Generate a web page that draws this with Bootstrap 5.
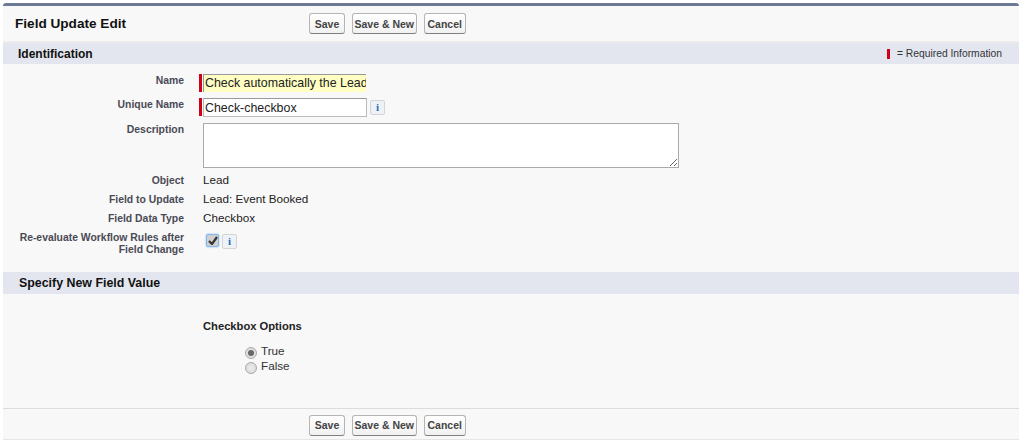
<!DOCTYPE html>
<html lang="en"><head><meta charset="utf-8"><title>Field Update Edit</title>
<link href="https://cdn.jsdelivr.net/npm/bootstrap@5.3.0/dist/css/bootstrap.min.css" rel="stylesheet">
<style>
html,body{height:447px;overflow:hidden;background:#fff}
body{font-family:"Liberation Sans",Arial,sans-serif;font-size:12px;color:#222;padding:3px 5px 0 3px}
.sf-panel{background:#f8f8f8;border-top:3px solid #6d7a96;border-radius:3px 3px 0 0;height:437px;border-bottom:1px solid #e6e6e6}
.sf-head{height:37px;border-bottom:2px solid #ececec}
.sf-title{width:306px;padding-left:12px;padding-top:2px;font-weight:700;font-size:13.6px;color:#111}
.sf-btn{font:700 10.5px "Liberation Sans",Arial,sans-serif;color:#444;height:21px;padding:0 1.5px;background:linear-gradient(#fff,#f1f1f1);border:1px solid #b5b5b5;border-bottom-color:#7f7f7f;border-radius:3px;min-width:36px}
.sf-btn:last-child{padding:0 3px}
.sf-btns{gap:7px}
.sf-bar{background:#e3e6ef;height:21px;color:#111;font-weight:700;font-size:12px}
.sf-bar1{padding-left:15px;padding-right:17px}
.sf-bar2{margin-top:13px;padding-left:16px;height:22px;font-size:12.4px}
.sf-req{font-weight:400;font-size:10.3px;color:#333}
.sf-redmark{width:3px;height:10px;background:#d0021b;margin-right:7px}
.sf-form{padding-top:10px}
.sf-row{display:flex}
.sf-lbl{width:181px;text-align:right;font-weight:700;font-size:10.4px;color:#4a4a56;line-height:12px;padding-top:1px;flex:none}
.sf-lbl1{padding-top:2px}
.sf-val{margin-left:19px;display:flex;align-items:flex-start;color:#222}
.sf-text{line-height:14px;font-size:11.7px}
.sf-input{width:164px;height:19px;box-sizing:border-box;border:1px solid #bbb;border-top-color:#999;padding:0 1px;font:12.4px "Liberation Sans",Arial,sans-serif;color:#222;background:#fff;display:block}
.sf-input.sf-yellow{width:163px;background:#ffffc4;border:0;border-top:1px solid #999;border-left:1px solid #999;height:18px;padding:0 0 2px 1px}
.sf-redbar{width:3px;background:#d0021b;height:18px;margin-left:-4px;margin-right:1px}
.sf-info{width:15px;height:15px;margin-left:3px;margin-top:2px;border:1px solid #d4d4d4;border-radius:2px;background:#eef2f6;color:#1d6fb8;font:700 11px/13px "Liberation Serif",serif;text-align:center}
.sf-info2{margin-top:0}
.sf-area{width:476px;height:45px;border:1px solid #aaa;background:#fff;display:block;padding:1px}
.sf-check{width:13px;height:13px;margin-left:3px;border-radius:2px;background:#cfcfcf;border:1px solid #85b5ea;box-shadow:0 0 2px #7fb2ee;display:flex;align-items:center;justify-content:center}
.sf-chkwrap{padding-top:4px}
.sf-opts{padding-left:200px;padding-top:25px;height:114px}
.sf-optlabel{font-weight:700;font-size:11.2px;color:#222;line-height:14px;margin-bottom:10px}
.sf-radio{display:flex;align-items:center;padding-left:42px;height:15px;line-height:14px;color:#333;font-size:11.7px}
.sf-dot{width:12px;height:12px;border-radius:50%;border:1px solid #aaa;background:radial-gradient(#ececec,#d6d6d6);margin-right:4px;margin-top:4px;display:flex;align-items:center;justify-content:center}
.sf-dot i{width:6px;height:6px;border-radius:50%;background:#666;display:block}
.sf-foot{border-top:1px solid #dcdcdc;height:33px;padding-left:306px}
.sf-h24{height:24px}.sf-h25{height:25px}.sf-h50{height:50px}.sf-h19{height:19px}.sf-h29{height:29px}
</style></head><body>
<div class="sf-panel">
 <div class="sf-head d-flex align-items-center">
  <div class="sf-title">Field Update Edit</div>
  <div class="d-flex sf-btns"><button class="sf-btn">Save</button><button class="sf-btn">Save &amp; New</button><button class="sf-btn">Cancel</button></div>
 </div>
 <div class="sf-bar sf-bar1 d-flex align-items-center justify-content-between">
  <span>Identification</span>
  <span class="sf-req d-flex align-items-center"><span class="sf-redmark"></span>= Required Information</span>
 </div>
 <div class="sf-form">
  <div class="sf-row sf-h24"><div class="sf-lbl">Name</div><div class="sf-val"><span class="sf-redbar"></span><input class="sf-input sf-yellow" value="Check automatically the Lead Event Booked"></div></div>
  <div class="sf-row sf-h25"><div class="sf-lbl">Unique Name</div><div class="sf-val"><span class="sf-redbar"></span><input class="sf-input" value="Check-checkbox"><span class="sf-info">i</span></div></div>
  <div class="sf-row sf-h50"><div class="sf-lbl">Description</div><div class="sf-val"><textarea class="sf-area"></textarea></div></div>
  <div class="sf-row sf-h19"><div class="sf-lbl sf-lbl1">Object</div><div class="sf-val sf-text">Lead</div></div>
  <div class="sf-row sf-h19"><div class="sf-lbl sf-lbl1">Field to Update</div><div class="sf-val sf-text">Lead: Event Booked</div></div>
  <div class="sf-row sf-h19"><div class="sf-lbl sf-lbl1">Field Data Type</div><div class="sf-val sf-text">Checkbox</div></div>
  <div class="sf-row sf-h29"><div class="sf-lbl sf-lbl1">Re-evaluate Workflow Rules after Field Change</div><div class="sf-val sf-chkwrap"><span class="sf-check"><svg width="10" height="9" viewBox="0 0 10 9"><path d="M1 5l3 3 5-7" fill="none" stroke="#333" stroke-width="2.2"/></svg></span><span class="sf-info sf-info2">i</span></div></div>
 </div>
 <div class="sf-bar sf-bar2 d-flex align-items-center">Specify New Field Value</div>
 <div class="sf-opts">
  <div class="sf-optlabel">Checkbox Options</div>
  <div class="sf-radio"><span class="sf-dot"><i></i></span>True</div>
  <div class="sf-radio"><span class="sf-dot"></span>False</div>
 </div>
 <div class="sf-foot d-flex align-items-center sf-btns"><button class="sf-btn">Save</button><button class="sf-btn">Save &amp; New</button><button class="sf-btn">Cancel</button></div>
</div>
<script src="https://cdn.jsdelivr.net/npm/bootstrap@5.3.0/dist/js/bootstrap.bundle.min.js"></script>
</body></html>
